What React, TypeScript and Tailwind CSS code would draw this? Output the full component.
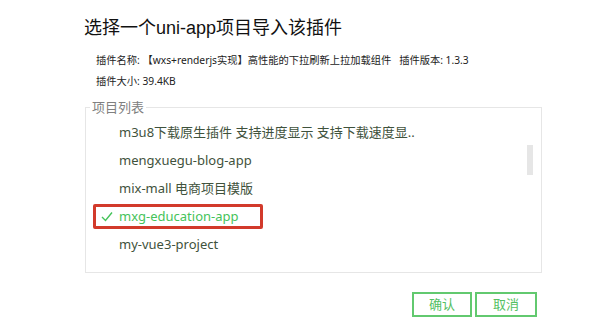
const projects = [
  "m3u8下载原生插件 支持进度显示 支持下载速度显..",
  "mengxuegu-blog-app",
  "mix-mall 电商项目模版",
  "mxg-education-app",
  "my-vue3-project",
];

const selected = "mxg-education-app";

export default function App() {
  return (
    <div
      className="w-[608px] h-[328px] bg-white overflow-hidden"
      style={{ fontFamily: '"Noto Sans", "Noto Sans CJK SC", sans-serif' }}
    >
      {/* Title */}
      <h1
        className="ml-[84px] pt-[16px] text-[18px] leading-[24px] text-[#111]"
        style={{ fontFamily: '"Liberation Sans", "Noto Sans CJK SC", sans-serif' }}
      >
        选择一个uni-app项目导入该插件
      </h1>

      {/* Plugin info */}
      <div className="ml-[96px] mt-[10px] text-[10.25px] leading-[21px] text-[#222]">
        <p>
          插件名称: 【wxs+renderjs实现】高性能的下拉刷新上拉加载组件
          <span className="ml-[8px]">插件版本: 1.3.3</span>
        </p>
        <p>插件大小: 39.4KB</p>
      </div>

      {/* Project list */}
      <fieldset className="ml-[85px] mt-[7px] w-[457px] border border-[#e6e6e6] pb-[13px]">
        <legend className="ml-[4px] px-[2px] text-[13px] leading-[16px] text-[#808080]">
          项目列表
        </legend>
        <div className="relative pt-[4px]">
          {projects.map((name) => {
            const isSel = name === selected;
            return (
              <div
                key={name}
                className={`relative h-[28px] pl-[33px] flex items-center text-[13px] ${
                  isSel ? "text-[#45c35a]" : "text-[#3f523c]"
                }`}
              >
                {isSel && (
                  <>
                    <span className="absolute left-[7px] top-[1px] w-[170px] h-[25px] border-[3px] border-[#d23a2b] rounded-[2px]" />
                    <svg
                      className="absolute left-[15px] top-[8px]"
                      width="12"
                      height="11"
                      viewBox="0 0 12 11"
                      fill="none"
                    >
                      <path d="M1 6 L4.5 9.5 L11 1.5" stroke="#45c35a" strokeWidth="1.4" />
                    </svg>
                  </>
                )}
                <span>{name}</span>
              </div>
            );
          })}
          {/* scrollbar thumb */}
          <div className="absolute left-[441px] top-[30px] w-[6px] h-[30px] bg-[#e6e6e6]" />
        </div>
      </fieldset>

      {/* Actions */}
      <div className="mt-[19px] mr-[71px] flex justify-end gap-[3px]">
        <button className="w-[60px] h-[25px] border-2 border-[#62c96f] text-[13px] text-[#55bf63] bg-white">
          确认
        </button>
        <button className="w-[62px] h-[25px] border-2 border-[#62c96f] text-[13px] text-[#55bf63] bg-white">
          取消
        </button>
      </div>
    </div>
  );
}
